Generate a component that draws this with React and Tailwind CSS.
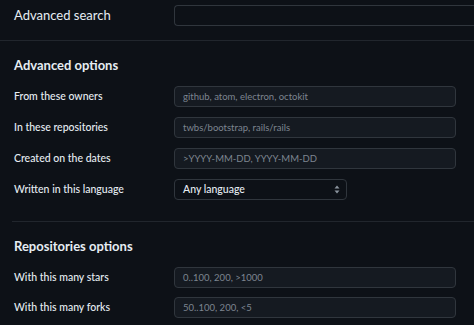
import React from "react";

const Row = ({ label, children }) => (
  <div className="flex items-center h-[21px]">
    <div className="w-[160px] text-[10.5px] font-medium text-[#e6edf3] leading-none">{label}</div>
    {children}
  </div>
);

const Input = ({ placeholder }) => (
  <div className="w-[282px] h-[21px] rounded-[4px] border border-[#30363d] bg-[#151a21] flex items-center px-[8px] text-[9.5px] text-[#7d8590] leading-none">
    {placeholder}
  </div>
);

export default function App() {
  return (
    <div className="w-[474px] h-[325px] overflow-hidden bg-[#0d1117] font-['Lato',sans-serif]">
      <div className="h-[41px] border-b border-[#21262d] flex items-start pt-[5px] pl-[14px]">
        <div className="w-[160px] h-[21px] flex items-center text-[13px] text-[#e6edf3] leading-none">Advanced search</div>
        <div className="flex-1 h-[21px] rounded-l-[4px] border border-r-0 border-[#30363d] bg-[#0d1117]"></div>
      </div>
      <div className="px-[14px]">
        <div className="mt-[15px] h-[20px] flex items-center text-[13px] font-bold text-[#e6edf3]">Advanced options</div>
        <div className="mt-[10px] flex flex-col gap-[10px]">
          <Row label="From these owners"><Input placeholder="github, atom, electron, octokit" /></Row>
          <Row label="In these repositories"><Input placeholder="twbs/bootstrap, rails/rails" /></Row>
          <Row label="Created on the dates"><Input placeholder=">YYYY-MM-DD, YYYY-MM-DD" /></Row>
          <Row label="Written in this language">
            <div className="w-[173px] h-[21px] rounded-[4px] border border-[#30363d] bg-[#0d1117] flex items-center justify-between pl-[8px] pr-[6px] text-[10.5px] font-medium text-[#e6edf3] leading-none">
              <span>Any language</span>
              <svg width="6" height="9" viewBox="0 0 6 9" fill="#8b949e">
                <path d="M3 0.5 L5.5 3.5 H0.5 Z" />
                <path d="M3 8.5 L5.5 5.5 H0.5 Z" />
              </svg>
            </div>
          </Row>
        </div>
      </div>
      <div className="ml-[12px] mt-[21px] border-t border-[#21262d]"></div>
      <div className="px-[14px]">
        <div className="mt-[15px] h-[20px] flex items-center text-[13px] font-bold text-[#e6edf3]">Repositories options</div>
        <div className="mt-[10px] flex flex-col gap-[9px]">
          <Row label="With this many stars"><Input placeholder="0..100, 200, >1000" /></Row>
          <Row label="With this many forks"><Input placeholder="50..100, 200, <5" /></Row>
        </div>
      </div>
    </div>
  );
}
